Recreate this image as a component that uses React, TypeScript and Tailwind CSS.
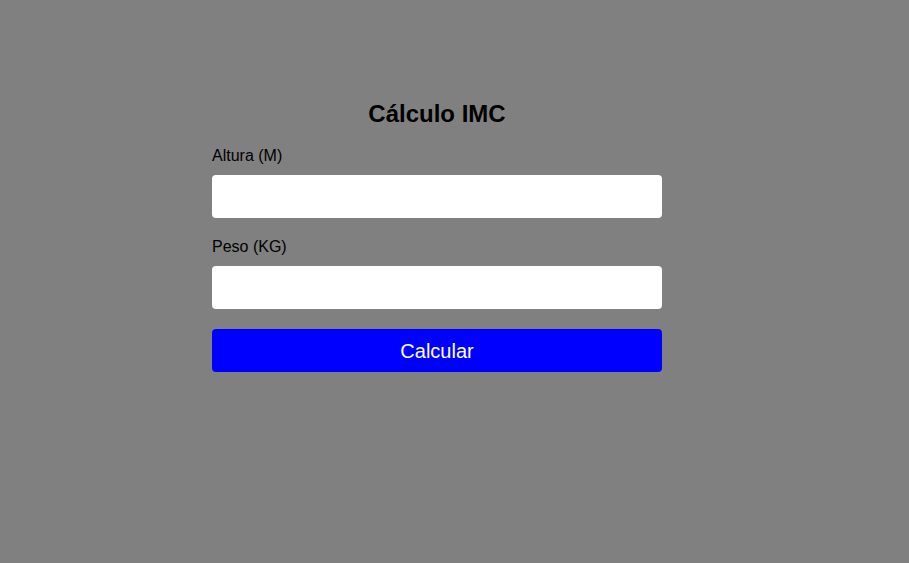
export default function App() {
  return (
    <div className="min-h-screen w-full bg-[#808080]" style={{ fontFamily: '"Liberation Sans", Arial, sans-serif' }}>
      <div className="w-[874px] flex justify-center">
        <div className="w-[450px] pt-[100px] flex flex-col">
          <h1 className="text-[24px] font-bold leading-[28px] text-center text-black mb-[19px]">Cálculo IMC</h1>
          <label className="block text-[16px] leading-[18px] text-black mb-[10px]">Altura (M)</label>
          <input type="text" className="block w-full h-[43px] bg-white rounded-[4px] outline-none px-2" />
          <label className="block text-[16px] leading-[18px] text-black mt-[20px] mb-[10px]">Peso (KG)</label>
          <input type="text" className="block w-full h-[43px] bg-white rounded-[4px] outline-none px-2" />
          <button className="mt-[20px] w-full h-[43px] bg-[#0000ff] text-white text-[20px] rounded-[4px] flex items-center justify-center">Calcular</button>
        </div>
      </div>
    </div>
  );
}
